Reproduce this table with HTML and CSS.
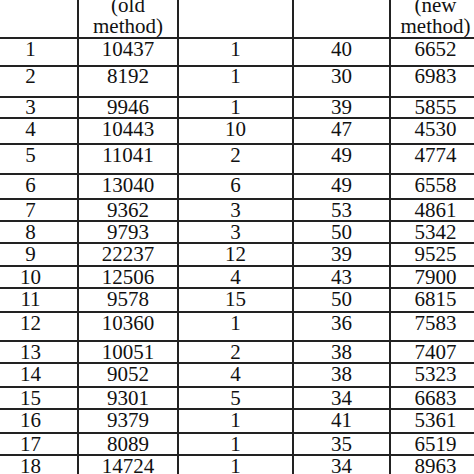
FILE: index.html
```html
<!DOCTYPE html>
<html>
<head>
<meta charset="utf-8">
<link rel="stylesheet" href="styles.css">
</head>
<body>
<div class="table">
  <div class="row head"><div class="c"></div><div class="c">(old<br>method)</div><div class="c"></div><div class="c"></div><div class="c">(new<br>method)</div></div>
  <div class="row h28"><div class="c">1</div><div class="c">10437</div><div class="c">1</div><div class="c">40</div><div class="c">6652</div></div>
  <div class="row h31 tight"><div class="c">2</div><div class="c">8192</div><div class="c">1</div><div class="c">30</div><div class="c">6983</div></div>
  <div class="row h21 tight"><div class="c">3</div><div class="c">9946</div><div class="c">1</div><div class="c">39</div><div class="c">5855</div></div>
  <div class="row h26"><div class="c">4</div><div class="c">10443</div><div class="c">10</div><div class="c">47</div><div class="c">4530</div></div>
  <div class="row h30"><div class="c">5</div><div class="c">11041</div><div class="c">2</div><div class="c">49</div><div class="c">4774</div></div>
  <div class="row h25"><div class="c">6</div><div class="c">13040</div><div class="c">6</div><div class="c">49</div><div class="c">6558</div></div>
  <div class="row h22"><div class="c">7</div><div class="c">9362</div><div class="c">3</div><div class="c">53</div><div class="c">4861</div></div>
  <div class="row h22"><div class="c">8</div><div class="c">9793</div><div class="c">3</div><div class="c">50</div><div class="c">5342</div></div>
  <div class="row h23"><div class="c">9</div><div class="c">22237</div><div class="c">12</div><div class="c">39</div><div class="c">9525</div></div>
  <div class="row h22"><div class="c">10</div><div class="c">12506</div><div class="c">4</div><div class="c">43</div><div class="c">7900</div></div>
  <div class="row h24"><div class="c">11</div><div class="c">9578</div><div class="c">15</div><div class="c">50</div><div class="c">6815</div></div>
  <div class="row h29"><div class="c">12</div><div class="c">10360</div><div class="c">1</div><div class="c">36</div><div class="c">7583</div></div>
  <div class="row h22"><div class="c">13</div><div class="c">10051</div><div class="c">2</div><div class="c">38</div><div class="c">7407</div></div>
  <div class="row h24"><div class="c">14</div><div class="c">9052</div><div class="c">4</div><div class="c">38</div><div class="c">5323</div></div>
  <div class="row h22"><div class="c">15</div><div class="c">9301</div><div class="c">5</div><div class="c">34</div><div class="c">6683</div></div>
  <div class="row h24"><div class="c">16</div><div class="c">9379</div><div class="c">1</div><div class="c">41</div><div class="c">5361</div></div>
  <div class="row h22"><div class="c">17</div><div class="c">8089</div><div class="c">1</div><div class="c">35</div><div class="c">6519</div></div>
  <div class="row h30"><div class="c">18</div><div class="c">14724</div><div class="c">1</div><div class="c">34</div><div class="c">8963</div></div>
</div>
</body>
</html>
```
FILE: styles.css
```css
html, body {
  margin: 0;
  padding: 0;
  overflow: hidden;
  background: #fff;
}
.table {
  margin-left: -16px;
  margin-top: -5px;
  width: 496px;
  font-family: "Liberation Serif", "Times New Roman", serif;
  font-size: 21px;
  line-height: 21px;
  color: #111;
}
.row {
  display: grid;
  grid-template-columns: 93px 100px 115px 97px 91px;
  box-sizing: border-box;
  border-bottom: 2px solid #222;
}
.row .c {
  text-align: center;
  box-sizing: border-box;
  white-space: nowrap;
}
.row .c + .c {
  border-left: 2px solid #222;
}
.head { height: 44px; }
.tight { line-height: 19px; }
.h21 { height: 21px; }
.h22 { height: 22px; }
.h23 { height: 23px; }
.h24 { height: 24px; }
.h25 { height: 25px; }
.h26 { height: 26px; }
.h28 { height: 28px; }
.h29 { height: 29px; }
.h30 { height: 30px; }
.h31 { height: 31px; }
```
